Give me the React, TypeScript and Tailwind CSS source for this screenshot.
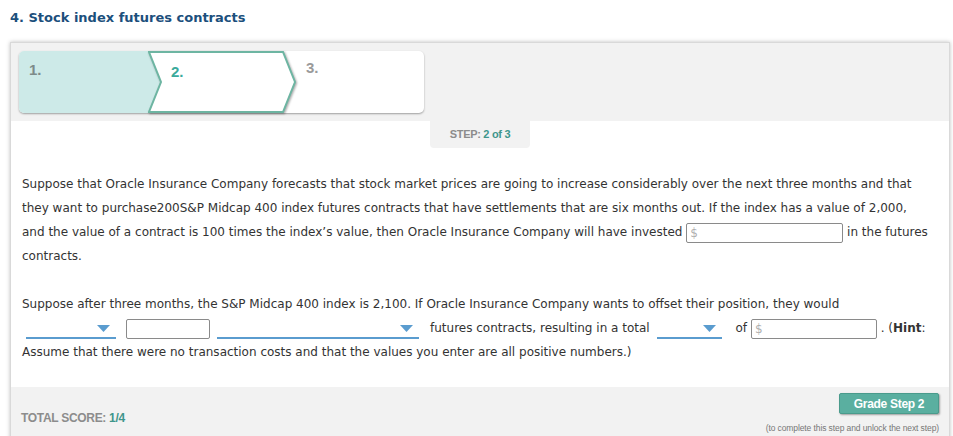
import React from 'react'

const Dropdown: React.FC<{ width: string }> = ({ width }) => (
  <span className={`inline-flex ${width} h-[20px] items-center justify-end border-b-2 border-[#5a9ccf] pr-[6px] align-middle`}>
    <svg width="13" height="7" viewBox="0 0 13 7" className="mt-[1px]">
      <polygon points="0,0 13,0 6.5,7" fill="#5a9ccf" />
    </svg>
  </span>
)

const MoneyInput: React.FC<{ width: string }> = ({ width }) => (
  <span className={`inline-flex ${width} h-[20px] items-center border border-[#8a8a8a] rounded-[2px] pl-[3px] align-middle text-[#b0b0b0] bg-white`}>
    $
  </span>
)

const App: React.FC = () => {
  return (
    <div className="w-[953px] h-[436px] overflow-hidden bg-white font-['DejaVu_Sans',sans-serif] text-[#333]">
      {/* Heading */}
      <h2 className="pl-[10px] pt-[10px] text-[13px] leading-[16px] font-bold text-[#1c4f7c]">
        4. Stock index futures contracts
      </h2>

      <div className="ml-[10px] mr-[3px] mt-[16px] border-l border-t border-r border-[#d9d9d9] shadow-[0_0_4px_rgba(0,0,0,0.25)]">
        {/* Step tabs */}
        <div className="bg-[#f2f2f2] h-[78px] pt-[8px] pl-[8px]">
          <div className="relative flex w-[405px] h-[62px] bg-white rounded-[5px] shadow-[0_1px_2px_rgba(0,0,0,0.35)] font-['Liberation_Sans',sans-serif] font-bold text-[15px]">
            <div className="w-[142px] h-full bg-[#cdeae8] rounded-l-[5px] pl-[10px] pt-[8px] text-[#7d8b8a]">1.</div>
            <div className="relative w-[135px] h-full">
              <svg
                width="150"
                height="64"
                viewBox="0 0 150 64"
                className="absolute left-[-13px] top-0 drop-shadow-[1px_1px_1px_rgba(0,0,0,0.35)]"
              >
                <polygon points="1,1 135,1 147,31 135,61 1,61 13,31" fill="#fff" stroke="#6db5a2" strokeWidth="2" />
              </svg>
              <span className="relative block pl-[10px] pt-[10px] text-[#3aaa9c]">2.</span>
            </div>
            <div className="flex-1 pl-[10px] pt-[6px] text-[#9a9a9a]">3.</div>
          </div>
        </div>

        {/* Content */}
        <div className="bg-white pb-[23px]">
          <div className="flex justify-center">
            <div className="w-[100px] h-[27px] bg-[#f2f2f2] rounded-b-[4px] flex items-center justify-center font-['Liberation_Sans',sans-serif] font-bold text-[11px] tracking-[-0.3px] text-[#8c8c8c]">
              STEP:&nbsp;<span className="text-[#3f968c]">2 of 3</span>
            </div>
          </div>

          <div className="pl-[11px] pr-[17px] pt-[24px] text-[12px] leading-[24px] text-[#333]">
            <p>
              Suppose that Oracle Insurance Company forecasts that stock market prices are going to increase considerably over the next three months and that they want to purchase200S&amp;P Midcap 400 index futures contracts that have settlements that are six months out. If the index has a value of 2,000, and the value of a contract is 100 times the index’s value, then Oracle Insurance Company will have invested <MoneyInput width="w-[157px]" /> in the futures contracts.
            </p>
            <p className="mt-[24px]">
              Suppose after three months, the S&amp;P Midcap 400 index is 2,100. If Oracle Insurance Company wants to offset their position, they would{' '}
              <br />
              <span className="inline-block w-[4px]" />
              <Dropdown width="w-[90px]" />
              <span className="inline-block w-[10px]" />
              <span className="inline-flex w-[84px] h-[20px] border border-[#8a8a8a] rounded-[2px] align-middle bg-white" />
              <span className="inline-block w-[7px]" />
              <Dropdown width="w-[202px]" />
              <span className="inline-block w-[11px]" />
              futures contracts, resulting in a total{' '}
              <span className="inline-block w-[3px]" />
              <Dropdown width="w-[65px]" />
              <span className="inline-block w-[14px]" />
              of{' '}
              <MoneyInput width="w-[126px]" />
              {' '}. (<b>Hint</b>: Assume that there were no transaction costs and that the values you enter are all positive numbers.)
            </p>
          </div>
        </div>

        {/* Footer */}
        <div className="bg-[#f2f2f2] h-[60px] flex justify-between px-[10px] pt-[6px] font-['Liberation_Sans',sans-serif]">
          <div className="pt-[16px] font-bold text-[12px] tracking-[-0.3px] text-[#8c8c8c]">
            TOTAL SCORE: <span className="text-[#3f968c]">1/4</span>
          </div>
          <div className="flex flex-col items-end">
            <button className="w-[100px] h-[21px] bg-[#5aafa0] border border-[#4a9b8c] rounded-[2px] shadow-[1px_1px_2px_rgba(0,0,0,0.35)] text-white font-bold text-[12px] tracking-[-0.3px]">
              Grade Step 2
            </button>
            <div className="mt-[8px] text-[8.5px] text-[#777] tracking-[-0.1px]">
              (to complete this step and unlock the next step)
            </div>
          </div>
        </div>
      </div>
    </div>
  )
}

export default App
